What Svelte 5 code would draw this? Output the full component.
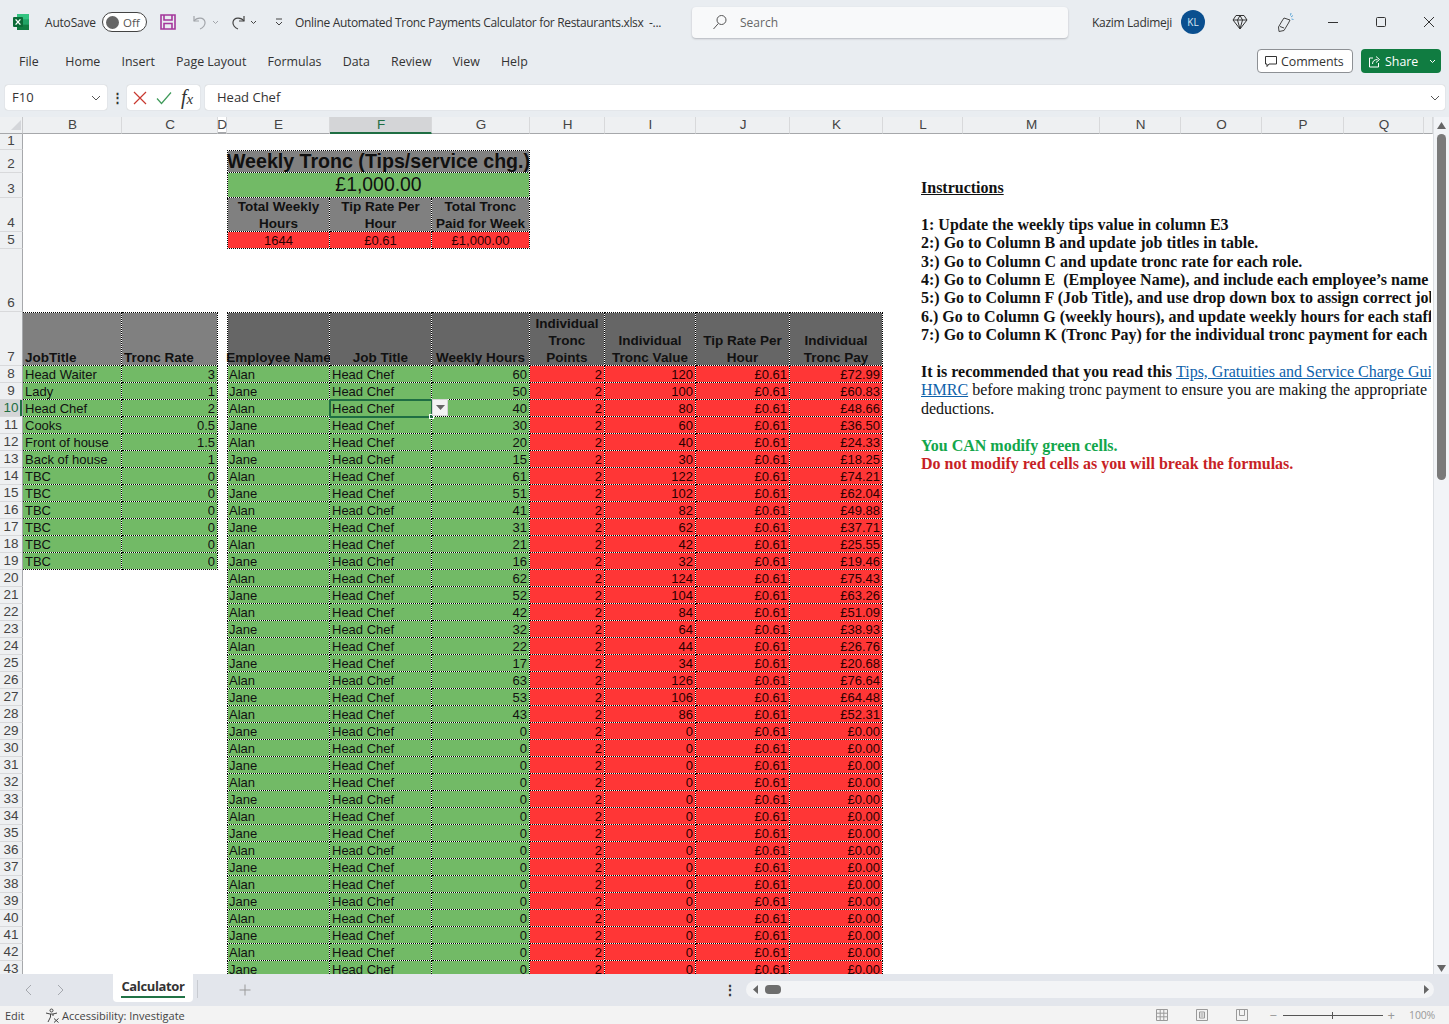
<script>
  const colNames = ['B','C','D','E','F','G','H','I','J','K','L','M','N','O','P','Q',''];
  const tabs = ['Home','Insert','Page Layout','Formulas','Data','Review','View','Help'];
  const left = [['Head Waiter',3],['Lady',1],['Head Chef',2],['Cooks',0.5],['Front of house',1.5],['Back of house',1],['TBC',0],['TBC',0],['TBC',0],['TBC',0],['TBC',0],['TBC',0]];
  const hours = [60,50,40,30,20,15,61,51,41,31,21,16,62,52,42,32,22,17,63,53,43];
  const pay = ['72.99','60.83','48.66','36.50','24.33','18.25','74.21','62.04','49.88','37.71','25.55','19.46','75.43','63.26','51.09','38.93','26.76','20.68','76.64','64.48','52.31'];

  const c = (t, cls) => ({ t, cls });
  function makeRow(n, spec) {
    const cells = [];
    for (let i = 0; i < colNames.length; i++) {
      const s = spec[colNames[i]];
      if (s) { cells.push(s); if (s.cls.includes('span3')) i += 2; }
      else cells.push(c('', 'blank'));
    }
    return { n, cells };
  }
  const rows = [];
  rows.push(makeRow(1, {}));
  rows.push(makeRow(2, { E: c('Weekly Tronc (Tips/service chg.)', 'cell span3 grey title ctr t l') }));
  rows.push(makeRow(3, { E: c('£1,000.00', 'cell span3 green amount ctr l') }));
  rows.push(makeRow(4, {
    E: c('Total Weekly Hours', 'cell grey hd ctr l'),
    F: c('Tip Rate Per Hour', 'cell grey hd ctr'),
    G: c('Total Tronc Paid for Week', 'cell grey hd ctr')
  }));
  rows.push(makeRow(5, {
    E: c('1644', 'cell red ctr l'), F: c('£0.61', 'cell red ctr'), G: c('£1,000.00', 'cell red ctr')
  }));
  rows.push(makeRow(6, {}));
  rows.push(makeRow(7, {
    B: c('JobTitle', 'cell grey hd t start'), C: c('Tronc Rate', 'cell grey hd t start'),
    E: c('Employee Name', 'cell dark hd t l ctr nw'), F: c('Job Title', 'cell dark hd t ctr'),
    G: c('Weekly Hours', 'cell dark hd t ctr nw'), H: c('Individual Tronc Points', 'cell dark hd t ctr'),
    I: c('Individual Tronc Value', 'cell dark hd t ctr'), J: c('Tip Rate Per Hour', 'cell dark hd t ctr'),
    K: c('Individual Tronc Pay', 'cell dark hd t ctr')
  }));
  for (let n = 8; n <= 43; n++) {
    const i = n - 8;
    const spec = {
      E: c(n % 2 ? 'Jane' : 'Alan', 'cell green l ind'),
      F: c('Head Chef', n === 10 ? 'cell green sel' : 'cell green'),
      G: c(hours[i] ?? 0, 'cell green end'),
      H: c(2, 'cell red end'),
      I: c((hours[i] ?? 0) * 2, 'cell red end'),
      J: c('£0.61', 'cell red end'),
      K: c('£' + (pay[i] ?? '0.00'), 'cell red end')
    };
    if (left[i]) {
      spec.B = c(left[i][0], 'cell green');
      spec.C = c(left[i][1], 'cell green end');
    }
    rows.push(makeRow(n, spec));
  }
</script>

<div class="app">
  <header class="titlebar">
    <svg class="logo" width="18" height="18" viewBox="0 0 18 18">
      <rect x="5" y="1" width="12" height="16" rx="1" fill="#21a366"/>
      <rect x="5" y="1" width="12" height="5.3" fill="#33c481"/>
      <rect x="5" y="11.7" width="12" height="5.3" fill="#107c41"/>
      <rect x="1" y="4" width="10" height="10" rx="1" fill="#0b6a37"/>
      <path d="M3.6 6.4 8.4 11.6M8.4 6.4 3.6 11.6" stroke="#fff" stroke-width="1.4"/>
    </svg>
    <span class="autosave">AutoSave</span>
    <span class="toggle"><i></i><b>Off</b></span>
    <svg class="save" width="18" height="18" viewBox="0 0 18 18" fill="none" stroke="#a4379c" stroke-width="1.6">
      <path d="M2 2h14v14H2z"/><path d="M5 2v5h8V2M5 16v-5.500h8V16"/>
    </svg>
    <svg class="undo" width="18" height="18" viewBox="0 0 18 18" fill="none" stroke="#a2a5aa" stroke-width="1.2">
      <path d="M3 3v5h5"/><path d="M3 8c3-4 10-4 11 1 .5 3-2 6-5 7"/>
    </svg>
    <svg class="chev c1" width="7" height="5" viewBox="0 0 7 5" fill="none" stroke="#a2a5aa"><path d="M1 1l2.500 2.500L6 1"/></svg>
    <svg class="redo" width="18" height="18" viewBox="0 0 18 18" fill="none" stroke="#444" stroke-width="1.2">
      <path d="M15 3v5h-5"/><path d="M15 8c-3-4-10-4-11 1-.5 3 2 6 5 7"/>
    </svg>
    <svg class="chev c2" width="7" height="5" viewBox="0 0 7 5" fill="none" stroke="#444"><path d="M1 1l2.500 2.500L6 1"/></svg>
    <svg class="qa" width="8" height="8" viewBox="0 0 8 8" fill="none" stroke="#444"><path d="M1 1h6M1 4l3 3 3-3"/></svg>
    <span class="doc">Online Automated Tronc Payments Calculator for Restaurants.xlsx&nbsp; -...</span>
    <div class="search">
      <svg width="16" height="16" viewBox="0 0 16 16" fill="none" stroke="#555"><circle cx="9.500" cy="6" r="4.500"/><path d="M6.300 9.500 1.500 15"/></svg>
      <span>Search</span>
    </div>
    <span class="user">Kazim Ladimeji</span>
    <span class="avatar">KL</span>
    <svg class="diamond" width="16" height="16" viewBox="0 0 16 16" fill="none" stroke="#333"><path d="M4 1.500h8L15 6l-7 9-7-9zM1 6h14M5.500 6 8 15l2.500-9L8 1.500z"/></svg>
    <svg class="pen" width="18" height="20" viewBox="0 0 18 20" fill="none" stroke="#444"><path d="M8 6l6 2-1.500 3-4.500 7.500-5 1-.5-4.500 3.500-6z"/><path d="M4 14.500l4 1.500"/><path d="M15 1l-.5 2.500M17 3.500l-2 1.500M17.500 7.500l-2-.5" stroke="#5aa5d8"/></svg>
    <div class="winbtns">
      <svg width="12" height="12" viewBox="0 0 12 12" stroke="#333"><path d="M1 6.500h10"/></svg>
      <svg width="12" height="12" viewBox="0 0 12 12" fill="none" stroke="#333"><rect x="1.500" y="1.500" width="9" height="9" rx="1"/></svg>
      <svg width="12" height="12" viewBox="0 0 12 12" stroke="#333"><path d="M1 1l10 10M11 1 1 11"/></svg>
    </div>
  </header>

  <nav class="menubar">
    <span class="file">File</span>
    {#each tabs as t}<span>{t}</span>{/each}
    <div class="actions">
      <button class="comments">
        <svg width="12" height="12" viewBox="0 0 12 12" fill="none" stroke="#333"><path d="M.5 1.500h11v7.500H4L2 11.500V9H.5z"/></svg>
        Comments
      </button>
      <button class="share">
        <svg width="13" height="13" viewBox="0 0 13 13" fill="none" stroke="#fff"><path d="M5 3H1.500v9h9V8"/><path d="M4.500 9c0-3 2-4.500 5-4.500M8 1.500l3.500 3-3.500 3"/></svg>
        Share
        <svg class="sharechev" width="7" height="5" viewBox="0 0 7 5" fill="none" stroke="#fff"><path d="M1 1l2.500 2.500L6 1"/></svg>
      </button>
    </div>
  </nav>

  <div class="formulabar">
    <div class="namebox"><span>F10</span>
      <svg width="10" height="6" viewBox="0 0 10 6" fill="none" stroke="#555"><path d="M1 1l4 4 4-4"/></svg>
    </div>
    <span class="dots">⋮</span>
    <div class="fxbox">
      <svg width="14" height="14" viewBox="0 0 14 14" stroke="#c8382f" stroke-width="1.200"><path d="M1 1l12 12M13 1 1 13"/></svg>
      <svg width="16" height="14" viewBox="0 0 16 14" fill="none" stroke="#3f9a5a" stroke-width="1.200"><path d="M1 7.500l4.500 5L15 1.500"/></svg>
      <em><i>f</i><small>x</small></em>
    </div>
    <div class="input"><span>Head Chef</span>
      <svg width="10" height="6" viewBox="0 0 10 6" fill="none" stroke="#555"><path d="M1 1l4 4 4-4"/></svg>
    </div>
  </div>

  <main class="sheet">
    <div class="gridwrap">
      <div class="grid">
        <div class="corner"><svg width="12" height="12" viewBox="0 0 12 12"><path d="M11 1v10H1z" fill="#d4d6da"/></svg></div>
        {#each colNames as name}
          <div class="colh" class:active={name === 'F'} class:narrow={name === 'D'}>{name}</div>
        {/each}
        {#each rows as r}
          <div class="rowh" class:active={r.n === 10}>{r.n}</div>
          {#each r.cells as cell}
            <div class={cell.cls}>
              {#if cell.t !== ''}<span>{cell.t}</span>{/if}
              {#if cell.cls.includes('sel')}
                <i class="handle"></i>
                <i class="dropdown"><svg width="9" height="5" viewBox="0 0 9 5"><path d="M0 0h9L4.500 5z" fill="#666"/></svg></i>
              {/if}
            </div>
          {/each}
        {/each}
      </div>
      <aside class="notes">
        <p class="u">Instructions</p>
        <p class="gap">1: Update the weekly tips value in column E3</p>
        <p>2:) Go to Column B and update job titles in table.</p>
        <p>3:) Go to Column C and update tronc rate for each role.</p>
        <p>4:) Go to Column E&nbsp; (Employee Name), and include each employee’s name in the table</p>
        <p>5:) Go to Column F (Job Title), and use drop down box to assign correct job</p>
        <p>6.) Go to Column G (weekly hours), and update weekly hours for each staff member</p>
        <p>7:) Go to Column K (Tronc Pay) for the individual tronc payment for each staff</p>
        <p class="gap">It is recommended that you read this <a href="#guide">Tips, Gratuities and Service Charge Guide</a></p>
        <p class="norm"><a href="#hmrc">HMRC</a> before making tronc payment to ensure you are making the appropriate tax</p>
        <p class="norm">deductions.</p>
        <p class="gap ok">You CAN modify green cells.</p>
        <p class="bad">Do not modify red cells as you will break the formulas.</p>
      </aside>
    </div>
    <div class="vscroll">
      <svg width="9" height="7" viewBox="0 0 9 7"><path d="M4.500 0 9 7H0z" fill="#666"/></svg>
      <div class="vthumb"></div>
      <svg class="vdown" width="9" height="7" viewBox="0 0 9 7"><path d="M0 0h9L4.500 7z" fill="#666"/></svg>
    </div>
  </main>

  <div class="tabbar">
    <svg class="nav n1" width="8" height="12" viewBox="0 0 8 12" fill="none" stroke="#a5a8ae"><path d="M7 1 2 6l5 5"/></svg>
    <svg class="nav n2" width="8" height="12" viewBox="0 0 8 12" fill="none" stroke="#a5a8ae"><path d="M1 1l5 5-5 5"/></svg>
    <div class="tab"><span>Calculator</span></div>
    <i class="divider"></i>
    <svg class="plus" width="12" height="12" viewBox="0 0 12 12" stroke="#999"><path d="M6 .5v11M.5 6h11"/></svg>
    <span class="tdots">⋮</span>
    <div class="hscroll">
      <svg width="5" height="9" viewBox="0 0 5 9"><path d="M5 0v9L0 4.500z" fill="#666"/></svg>
      <div class="hthumb"></div>
      <svg class="hright" width="5" height="9" viewBox="0 0 5 9"><path d="M0 0v9l5-4.500z" fill="#666"/></svg>
    </div>
  </div>

  <footer class="status">
    <span class="edit">Edit</span>
    <svg class="acc" width="15" height="15" viewBox="0 0 15 15" fill="none" stroke="#444"><circle cx="6.500" cy="2.500" r="1.500"/><path d="M1 5l4 1h3l4-1M5.500 6v3L3 14M8 6v2M9 10.500l4.500 4M13.500 10.500l-4.500 4"/></svg>
    <span class="acctext">Accessibility: Investigate</span>
    <div class="viewicons">
      <svg width="14" height="14" viewBox="0 0 14 14" fill="none" stroke="#9a9a9a"><path d="M1.500 1.500h11v11h-11zM5.200 1.500v11M8.800 1.500v11M1.500 5.200h11M1.500 8.800h11"/></svg>
      <svg width="14" height="14" viewBox="0 0 14 14" fill="none" stroke="#9a9a9a"><path d="M1.500 1.500h11v11h-11zM4.500 4h5v6h-5zM5.500 6h3M5.500 8h3"/></svg>
      <svg width="14" height="14" viewBox="0 0 14 14" fill="none" stroke="#9a9a9a"><path d="M1.500 1.500h11v11h-11zM4.500 1.500v6h5v-6"/></svg>
    </div>
    <div class="zoom">
      <span class="zm">−</span>
      <div class="slider"><i></i></div>
      <span class="zm plusz">+</span>
      <span class="pct">100%</span>
    </div>
  </footer>
</div>

<style>
  :global(body) { margin: 0; overflow: hidden; background: #e9edf1; }
  * { box-sizing: border-box; }
  .app { width: 1449px; height: 1024px; display: flex; flex-direction: column; font-family: "Open Sans", "Noto Sans", sans-serif; color: #333; overflow: hidden; background: #e9edf1; }

  .titlebar { height: 44px; display: flex; align-items: center; font-size: 12px; flex: none; }
  .logo { margin-left: 12px; }
  .autosave { margin-left: 15px; width: 50px; letter-spacing: -.2px; white-space: nowrap; }
  .toggle { margin-left: 7px; width: 45px; height: 20px; border: 1px solid #444; border-radius: 10px; background: #fff; display: flex; align-items: center; padding-left: 3px; gap: 4px; }
  .toggle i { width: 13px; height: 13px; border-radius: 50%; background: #666; }
  .toggle b { font-weight: 400; font-size: 11.500px; color: #555; }
  .save { margin-left: 12px; }
  .undo { margin-left: 14px; }
  .chev { flex: none; }
  .c1 { margin-left: 3px; }
  .redo { margin-left: 10px; }
  .c2 { margin-left: 3px; }
  .qa { margin-left: 18px; }
  .doc { margin-left: 12px; width: 380px; white-space: nowrap; letter-spacing: -.33px; }
  .search { margin-left: 17px; width: 376px; height: 31px; flex: none; background: #f8f9fa; border-radius: 4px; box-shadow: 0 1px 2px #b5b8bd; display: flex; align-items: center; padding-left: 20px; gap: 12px; color: #666; }
  .user { margin-left: 24px; width: 82px; white-space: nowrap; letter-spacing: -.3px; }
  .avatar { margin-left: 7px; width: 24px; height: 24px; border-radius: 50%; background: #0a4f8f; color: #dbe7f3; font-size: 10px; display: flex; align-items: center; justify-content: center; flex: none; }
  .diamond { margin-left: 27px; }
  .pen { margin-left: 28px; }
  .winbtns { margin-left: 33px; display: flex; gap: 36px; }

  .menubar { height: 36px; display: flex; align-items: center; gap: 21.200px; font-size: 12.400px; flex: none; padding-left: 19px; padding-bottom: 2px; }
  .menubar .file { margin-right: 5.500px; }
  .actions { margin-left: auto; display: flex; gap: 8px; padding-right: 8px; }
  button { font: inherit; display: flex; align-items: center; height: 24px; border-radius: 4px; }
  .comments { width: 96px; background: #fff; border: 1px solid #8d9094; color: #333; gap: 4px; padding: 0 0 0 7px; letter-spacing: -.05px; }
  .share { width: 80px; background: #107c41; border: none; color: #fff; gap: 4px; padding: 0 0 0 7px; }
  .sharechev { margin-left: 7px; }

  .formulabar { height: 37px; flex: none; display: flex; padding: 5px 4px 7px 5px; align-items: stretch; font-size: 13px; }
  .namebox { width: 102px; background: #fff; border-radius: 3px; box-shadow: 0 0 1px #aaa; display: flex; align-items: center; justify-content: space-between; padding: 0 6px 0 7px; }
  .namebox span, .input span { margin-bottom: 2px; }
  .dots { width: 20px; text-align: center; line-height: 25px; font-weight: 700; }
  .fxbox { width: 73px; background: #fff; border-radius: 3px; box-shadow: 0 0 1px #aaa; display: flex; align-items: center; gap: 9px; padding-left: 6px; }
  .fxbox em { font-family: "Liberation Serif", serif; font-size: 20px; color: #333; white-space: nowrap; }
  .fxbox small { font-size: 15px; }
  .input { margin-left: 5px; flex: 1; background: #fff; border-radius: 3px; box-shadow: 0 0 1px #aaa; display: flex; align-items: center; justify-content: space-between; padding: 0 5px 0 12px; }

  .sheet { height: 857px; flex: none; display: flex; background: #fff; overflow: hidden; }
  .gridwrap { position: relative; width: 1433px; flex: none; overflow: hidden; }
  .grid { display: grid; grid-template-columns: 23px 99px 96px 9px 103px 102px 98px 75px 91px 94px 93px 80px 137px 81px 81px 82px 80px 9px; grid-template-rows: 17px 16px 23px 25px 34px 17px 63px 54px; grid-auto-rows: 17px; background: #fff; font-family: "Liberation Sans", Arial, sans-serif; font-size: 13px; color: #111; width: 1433px; }
  .corner { background: #eef0f2; border-bottom: 1px solid #a6a8ab; border-right: 1px solid #c8c9cb; display: flex; align-items: center; justify-content: flex-end; }
  .colh { background: #eef0f2; border-bottom: 1px solid #a6a8ab; border-right: 1px solid #d8d9db; text-align: center; font-size: 13.500px; color: #444; line-height: 16px; padding-left: 1px; }
  .colh.active { background: #d4d5d7; color: #1f6e43; border-bottom: 2px solid #1f6e43; }
  .colh.narrow { z-index: 1; padding: 0; display: flex; justify-content: center; background: transparent; box-shadow: inset 0 -1px 0 #a6a8ab; }
  .rowh { background: #eef0f2; border-right: 1px solid #a6a8ab; border-bottom: 1px solid #d8d9db; font-size: 13.500px; color: #444; display: flex; align-items: flex-end; justify-content: center; line-height: 16px; }
  .rowh.active { background: #d4d5d7; color: #1f6e43; box-shadow: inset -2px 0 0 #1f6e43; }

  .blank { background: #fff; }
  .cell { display: flex; align-items: flex-end; padding: 0 2px; line-height: 16px; white-space: nowrap; background-clip: padding-box; border-right: 1px dotted #000; border-bottom: 1px dotted #000; position: relative; }
  .cell.t { border-top: 1px dotted #000; }
  .cell.l { border-left: 1px dotted #000; }
  .cell span { display: block; margin-bottom: -1px; }
  .grey { background-color: #808080; }
  .dark { background-color: #666; }
  .green { background-color: #72ba66; }
  .red { background-color: #ff3636; color: #2b0000; }
  .span3 { grid-column: span 3; }
  .ctr { justify-content: center; text-align: center; }
  .end { justify-content: flex-end; }
  .cell.ind { padding-left: 1px; }
  .hd { font-size: 13.500px; font-weight: 700; white-space: normal; padding: 0 1px; line-height: 17px; }
  .hd.start { justify-content: flex-start; padding-left: 2px; }
  .hd.nw { white-space: nowrap; padding: 0; }
  .title { font-weight: 700; font-size: 19.600px; line-height: 22px; padding: 0; align-items: center; }
  .cell.title span { margin-bottom: 2px; }
  .amount { font-size: 19.400px; line-height: 22px; }
  .cell.amount span { margin-bottom: 2px; }
  .sel { outline: 2px solid #1f6e43; outline-offset: -1px; z-index: 2; overflow: visible; }
  .handle { position: absolute; right: -3px; bottom: -3px; width: 5px; height: 5px; background: #1f6e43; border: 1px solid #fff; }
  .dropdown { position: absolute; left: calc(100% + 1px); top: -1px; width: 16px; height: 17px; background: #f3f3f3; border: 1px solid #d5d5d5; display: flex; align-items: center; justify-content: center; z-index: 3; }

  .notes { position: absolute; left: 921px; top: 62px; width: 510px; height: 330px; overflow: hidden; font-family: "Liberation Serif", "Times New Roman", serif; font-size: 16px; font-weight: 700; line-height: 18.400px; color: #111; white-space: nowrap; }
  .notes p { margin: 0; }
  .notes .gap { margin-top: 18.400px; }
  .notes .u { text-decoration: underline; }
  .notes .norm { font-weight: 400; }
  .notes a { color: #0e62ab; font-weight: 400; text-decoration: underline; }
  .notes .ok { color: #12a64b; }
  .notes .bad { color: #c71f26; }

  .vscroll { width: 16px; flex: none; background: #f2f4f7; border-left: 1px solid #dde0e4; display: flex; flex-direction: column; align-items: center; padding-top: 5px; }
  .vthumb { width: 9px; height: 346px; margin-top: 5px; background: #7a7a7a; border-radius: 5px; }
  .vdown { margin-top: auto; margin-bottom: 2px; }

  .tabbar { height: 32px; flex: none; background: #e3e6ec; display: flex; align-items: flex-start; }
  .nav { margin-top: 10px; flex: none; }
  .n1 { margin-left: 24px; }
  .n2 { margin-left: 25px; }
  .tab { margin-left: 48px; width: 80px; height: 28px; background: #fff; border-radius: 0 0 4px 4px; display: flex; justify-content: center; flex: none; }
  .tab span { font-family: "Open Sans", sans-serif; font-size: 13px; font-weight: 700; color: #333; height: 24px; border-bottom: 2px solid #217346; line-height: 24px; letter-spacing: -.35px; }
  .divider { width: 1px; height: 18px; background: #c8cbd1; margin: 6px 0 0 4px; flex: none; }
  .plus { margin: 10px 0 0 41px; flex: none; }
  .tdots { margin-left: 469px; width: 20px; text-align: center; color: #333; font-weight: 700; line-height: 32px; font-size: 14px; }
  .hscroll { margin: 7px 0 0 6px; width: 688px; height: 17px; background: #f3f4f6; border-radius: 9px; display: flex; align-items: center; padding: 0 5px 0 7px; flex: none; }
  .hthumb { margin-left: 7px; width: 16px; height: 9px; background: #6d6d6d; border-radius: 4px; }
  .hright { margin-left: auto; }

  .status { height: 18px; flex: none; background: #f3f3f3; display: flex; align-items: center; font-size: 11px; color: #444; }
  .edit { margin-left: 5px; width: 40px; }
  .acc { flex: none; }
  .acctext { margin-left: 2px; white-space: nowrap; }
  .viewicons { margin-left: auto; display: flex; gap: 26px; }
  .zoom { display: flex; align-items: center; margin-left: 17px; padding-right: 14px; color: #999; }
  .zm { width: 14px; text-align: center; font-size: 13px; margin-right: 3px; }
  .plusz { margin: 0 0 0 1px; }
  .slider { width: 100px; height: 1px; background: #555; position: relative; }
  .slider i { position: absolute; left: 49px; top: -3px; width: 1px; height: 7px; background: #555; }
  .pct { margin-left: 11px; font-size: 10.500px; letter-spacing: -.2px; }
</style>
